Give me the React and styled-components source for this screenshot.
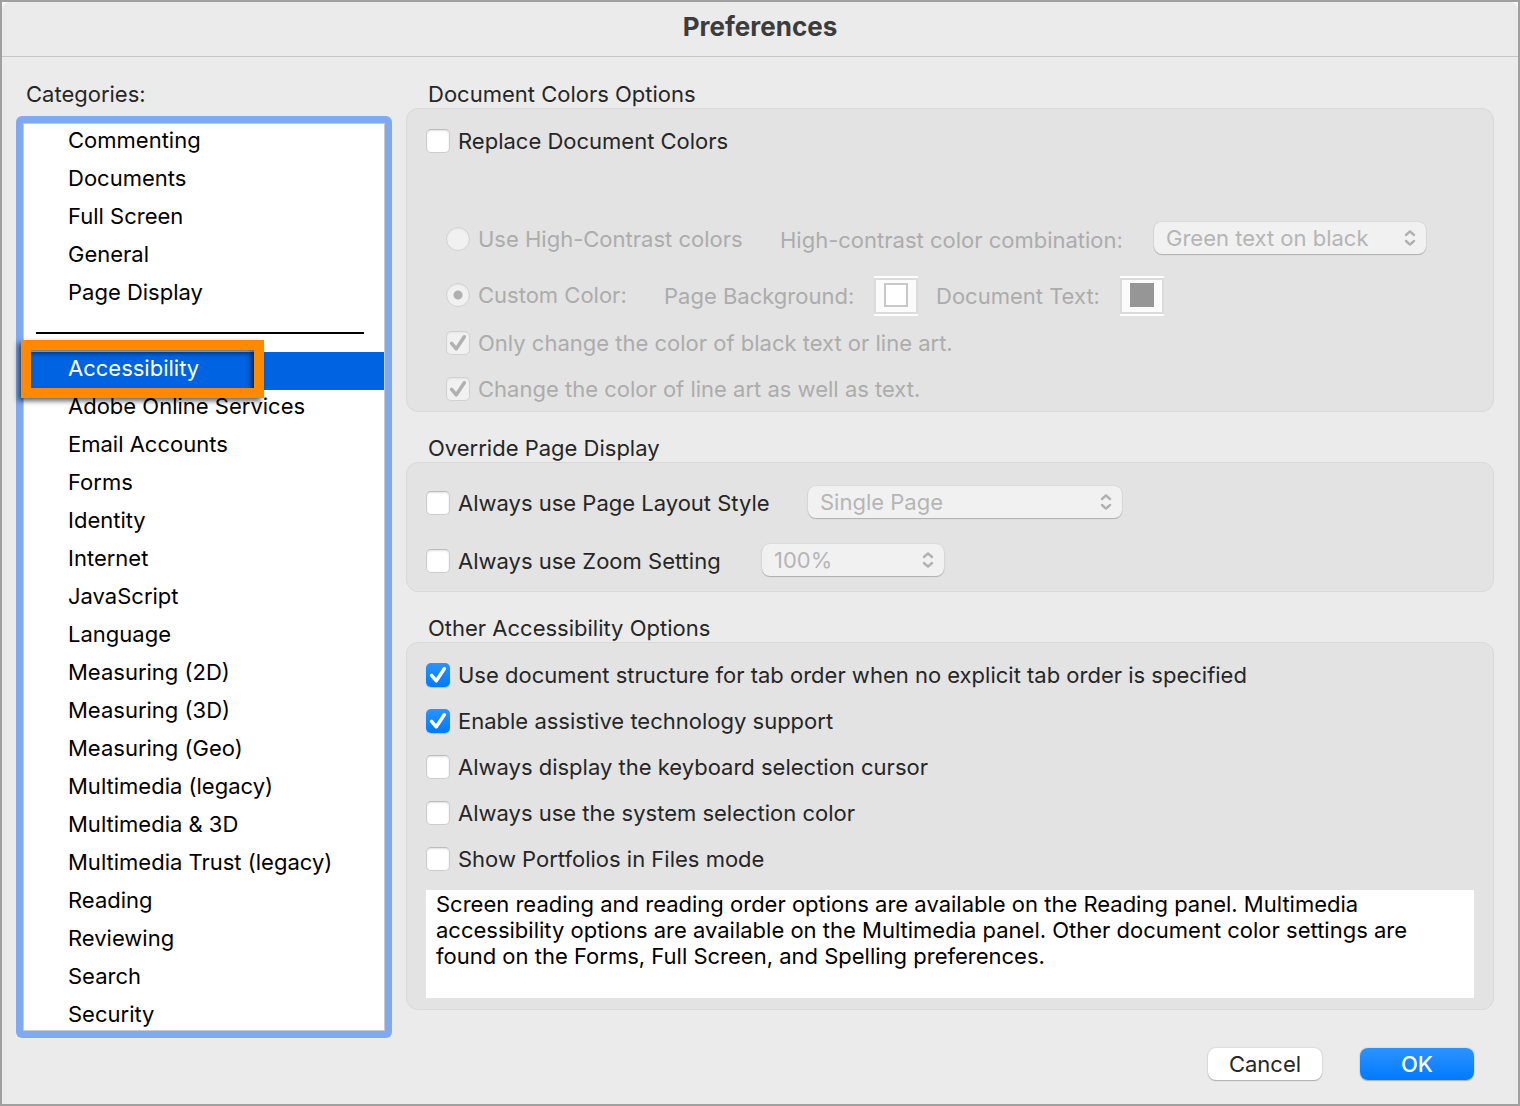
import React, { useState } from 'react'
import styled, { createGlobalStyle } from 'styled-components'


const GlobalStyle = createGlobalStyle`
*{
  box-sizing:border-box;
}
body{
  margin:0;
  font-family:Inter, "Liberation Sans", sans-serif;
  font-size:22px;
  line-height:28px;
  color:#262626;
}
button, select, textarea, input{
  font:inherit;
  margin:0;
}
`

const Frame = styled.div`
min-height:100vh;
display:flex;
border:2px solid #a0a0a0;
background-color:#fafafa;
`

const Window = styled.main`
flex:1;
min-width:0;
border-radius:8px 8px 0px 0px;
background-color:#ebebeb;
`

const TitleBar = styled.header`
height:55px;
display:flex;
justify-content:center;
padding-top:9px;
border-bottom:1px solid #c6c6c6;
`

const Title = styled.h1`
margin:0;
font-size:26px;
line-height:32px;
font-weight:700;
color:#3c3c3c;
`

const Body = styled.div`
display:flex;
align-items:flex-start;
gap:14px;
padding:23px 24px 24px 14px;
`

const Sidebar = styled.nav`
width:376px;
flex-shrink:0;
`

const SidebarTitle = styled.h2`
margin:0px 0px 8px;
padding-left:10px;
font-size:22px;
font-weight:400;
`

const ListFrame = styled.div`
padding:7px;
border-radius:6px;
background-color:#80a9f2;
`

const List = styled.ul`
margin:0;
padding:0;
list-style:none;
border:1px solid #c9c9c9;
background-color:white;
`

const ListItem = styled.li`
position:relative;
height:38px;

&:last-child{
  height:32px;
}
`

const Category = styled.button`
display:flex;
align-items:flex-start;
width:100%;
height:100%;
padding:2px 0px 0px 44px;
border:none;
text-align:left;
line-height:28px;
color:${props => props.$active ? 'white' : 'black'};
background-color:${props => props.$active ? '#0063e1' : 'transparent'};
`

const Divider = styled.hr`
margin:0px 20px 0px 12px;
border:none;
border-bottom:2px solid black;
padding-top:18px;
`

const Highlight = styled.span`
position:absolute;
z-index:1;
left:-3px;
top:-12px;
width:243px;
height:58px;
border:10px solid #ff8a00;
box-shadow:-3px 3px 5px rgba(0,0,0,0.6), inset -3px 3px 5px rgba(0,0,0,0.6);
pointer-events:none;
`

const Content = styled.form`
flex:1;
min-width:0;
`

const Section = styled.fieldset`
min-width:0;
margin:0px 0px 22px;
padding:0;
border:none;
`

const Legend = styled.legend`
padding:0px 0px 0px 22px;
`

const Panel = styled.div`
display:flex;
flex-direction:column;
gap:${props => props.$gap || '0px'};
padding:${props => props.$padding};
border:1px solid #d9d9d9;
border-radius:12px;
background-color:#e3e3e3;
`

const Row = styled.div`
height:46px;
display:flex;
align-items:center;
`

const SubOptions = styled.div`
margin-bottom:-1px;
padding:52px 0px 0px 20px;
`

const ColorRow = styled(Row)`
margin:10px 0px 2px;
`

const Option = styled.label`
width:${props => props.$width || 'auto'};
flex-shrink:0;
display:flex;
align-items:center;
gap:8px;
color:${props => props.$disabled ? '#acacac' : '#262626'};
`

const FieldLabel = styled.label`
width:${props => props.$width};
flex-shrink:0;
padding-top:2px;
color:#acacac;
`

const Tick = styled.span`
display:grid;
width:24px;
height:24px;
flex-shrink:0;

input, svg{
  grid-area:1 / 1;
}
svg{
  display:none;
  pointer-events:none;
}
input:checked + svg{
  display:block;
}
`

const Box = styled.input`
appearance:none;
width:24px;
height:24px;
border:1px solid #cdcdcd;
border-top-color:#bdbdbd;
border-radius:5px;
background-color:white;
box-shadow:inset 0px 1px 2px rgba(0,0,0,0.12);

&:checked{
  border:none;
  background:linear-gradient(#2c93ff, #007aff);
  box-shadow:0px 1px 1px rgba(0,90,220,0.25);
}
&:disabled{
  border:1px solid #d2d2d2;
  background:#f1f1f1;
  box-shadow:inset 0px 1px 2px rgba(0,0,0,0.06);
}
`

const Dot = styled(Box)`
border-radius:50%;

&:disabled:checked{
  background:radial-gradient(circle, #b0b0b0 4px, #f1f1f1 5px);
}
`

const SelectWrap = styled.div`
position:relative;
width:${props => props.$width};
height:32px;
margin-bottom:2px;

svg{
  position:absolute;
  right:10px;
  top:7px;
  pointer-events:none;
}
`

const Select = styled.select`
appearance:none;
display:block;
width:100%;
height:32px;
padding:0px 30px 0px 12px;
border:none;
border-radius:8px;
line-height:28px;
color:#b5b5b5;
opacity:1;
background-color:#f1f1f1;
box-shadow:0px 1px 1px rgba(0,0,0,0.2), 0px 0px 2px rgba(0,0,0,0.12);
`

const Swatch = styled.button`
width:44px;
height:36px;
flex-shrink:0;
display:flex;
justify-content:center;
align-items:flex-start;
margin:2px 18px 0px 0px;
padding:3px 0px 0px;
border:2px solid #dbdbdb;
background-color:#fbfbfb;
box-shadow:0px -2px white, 0px 2px white;
`

const SwatchColor = styled.span`
width:24px;
height:24px;
border:2px solid ${props => props.$edge};
background-color:${props => props.$fill};
`

const Note = styled.textarea`
display:block;
width:100%;
height:108px;
margin-top:8px;
padding:1px 10px;
border:none;
outline:none;
resize:none;
overflow:hidden;
line-height:26px;
color:black;
background-color:white;
`

const Actions = styled.div`
display:flex;
justify-content:flex-end;
gap:38px;
margin-top:38px;
padding-right:20px;
`

const Button = styled.button`
width:114px;
height:32px;
padding:0;
border:none;
border-radius:8px;
line-height:32px;
font-weight:${props => props.$primary ? 500 : 400};
color:${props => props.$primary ? 'white' : '#262626'};
background:${props => props.$primary ? 'linear-gradient(#2c93ff, #007aff)' : 'white'};
box-shadow:0px 1px 1px rgba(0,0,0,0.22), 0px 0px 2px rgba(0,0,0,0.2);
`

const general = ['Commenting', 'Documents', 'Full Screen', 'General', 'Page Display']

const categories = [
    'Accessibility',
    'Adobe Online Services',
    'Email Accounts',
    'Forms',
    'Identity',
    'Internet',
    'JavaScript',
    'Language',
    'Measuring (2D)',
    'Measuring (3D)',
    'Measuring (Geo)',
    'Multimedia (legacy)',
    'Multimedia & 3D',
    'Multimedia Trust (legacy)',
    'Reading',
    'Reviewing',
    'Search',
    'Security',
]

const otherOptions = [
    { label: 'Use document structure for tab order when no explicit tab order is specified', checked: true },
    { label: 'Enable assistive technology support', checked: true },
    { label: 'Always display the keyboard selection cursor' },
    { label: 'Always use the system selection color' },
    { label: 'Show Portfolios in Files mode' },
]

const note = 'Screen reading and reading order options are available on the Reading panel. Multimedia accessibility options are available on the Multimedia panel. Other document color settings are found on the Forms, Full Screen, and Spelling preferences.'

const Checkbox = ({ label, width, disabled, checked }) => (
    <Option $width={width} $disabled={disabled}>
        <Tick>
            <Box type="checkbox" defaultChecked={checked} disabled={disabled}/>
            <svg width="24" height="24" viewBox="0 0 24 24" fill="none" stroke={disabled ? '#b0b0b0' : 'white'} strokeWidth="3.5" strokeLinecap="round" strokeLinejoin="round">
                <path d="M5.6 12.4L10.3 17.8L18.3 5.8"/>
            </svg>
        </Tick>
        {label}
    </Option>
)

const Radio = ({ label, width, checked }) => (
    <Option $width={width} $disabled>
        <Dot type="radio" name="colorMode" defaultChecked={checked} disabled/>
        {label}
    </Option>
)

const Dropdown = ({ id, label, value, width }) => (
    <SelectWrap $width={width}>
        <Select id={id} aria-label={label} disabled>
            <option>{value}</option>
        </Select>
        <svg width="12" height="18" viewBox="0 0 12 18" fill="none" stroke="#b0b0b0" strokeWidth="2.4" strokeLinecap="round" strokeLinejoin="round">
            <path d="M2 6L6 2.4L10 6M2 12L6 15.6L10 12"/>
        </svg>
    </SelectWrap>
)

const App = () => {
    const [active, setActive] = useState('Accessibility')

    const renderItem = (name) => (
        <ListItem key={name}>
            <Category type="button" $active={name === active} onClick={() => setActive(name)}>{name}</Category>
            {name === 'Accessibility' && <Highlight/>}
        </ListItem>
    )

    return (
        <Frame>
            <GlobalStyle/>
            <Window>
                <TitleBar>
                    <Title>Preferences</Title>
                </TitleBar>
                <Body>
                    <Sidebar>
                        <SidebarTitle>Categories:</SidebarTitle>
                        <ListFrame>
                            <List>
                                {general.map(renderItem)}
                                <ListItem><Divider/></ListItem>
                                {categories.map(renderItem)}
                            </List>
                        </ListFrame>
                    </Sidebar>
                    <Content>
                        <Section>
                            <Legend>Document Colors Options</Legend>
                            <Panel $padding="9px 19px 0px">
                                <Row><Checkbox label="Replace Document Colors"/></Row>
                                <SubOptions>
                                    <Row>
                                        <Radio label="Use High-Contrast colors" width="334px"/>
                                        <FieldLabel $width="374px" htmlFor="contrast">High-contrast color combination:</FieldLabel>
                                        <Dropdown id="contrast" value="Green text on black" width="272px"/>
                                    </Row>
                                    <ColorRow>
                                        <Radio label="Custom Color:" width="218px" checked/>
                                        <FieldLabel $width="210px" htmlFor="background">Page Background:</FieldLabel>
                                        <Swatch id="background" type="button" disabled>
                                            <SwatchColor $edge="#c8c8c8" $fill="white"/>
                                        </Swatch>
                                        <FieldLabel $width="184px" htmlFor="text">Document Text:</FieldLabel>
                                        <Swatch id="text" type="button" disabled>
                                            <SwatchColor $edge="#969696" $fill="#969696"/>
                                        </Swatch>
                                    </ColorRow>
                                    <Row><Checkbox label="Only change the color of black text or line art." checked disabled/></Row>
                                    <Row><Checkbox label="Change the color of line art as well as text." checked disabled/></Row>
                                </SubOptions>
                            </Panel>
                        </Section>
                        <Section>
                            <Legend>Override Page Display</Legend>
                            <Panel $padding="17px 19px 7px" $gap="12px">
                                <Row>
                                    <Checkbox label="Always use Page Layout Style" width="382px"/>
                                    <Dropdown label="Page Layout Style" value="Single Page" width="314px"/>
                                </Row>
                                <Row>
                                    <Checkbox label="Always use Zoom Setting" width="336px"/>
                                    <Dropdown label="Zoom Setting" value="100%" width="182px"/>
                                </Row>
                            </Panel>
                        </Section>
                        <Section>
                            <Legend>Other Accessibility Options</Legend>
                            <Panel $padding="9px 19px 11px">
                                {otherOptions.map(option => (
                                    <Row key={option.label}><Checkbox {...option}/></Row>
                                ))}
                                <Note aria-label="Description" readOnly value={note}/>
                            </Panel>
                        </Section>
                        <Actions>
                            <Button type="button">Cancel</Button>
                            <Button type="button" $primary>OK</Button>
                        </Actions>
                    </Content>
                </Body>
            </Window>
        </Frame>
    )
}

export default App
